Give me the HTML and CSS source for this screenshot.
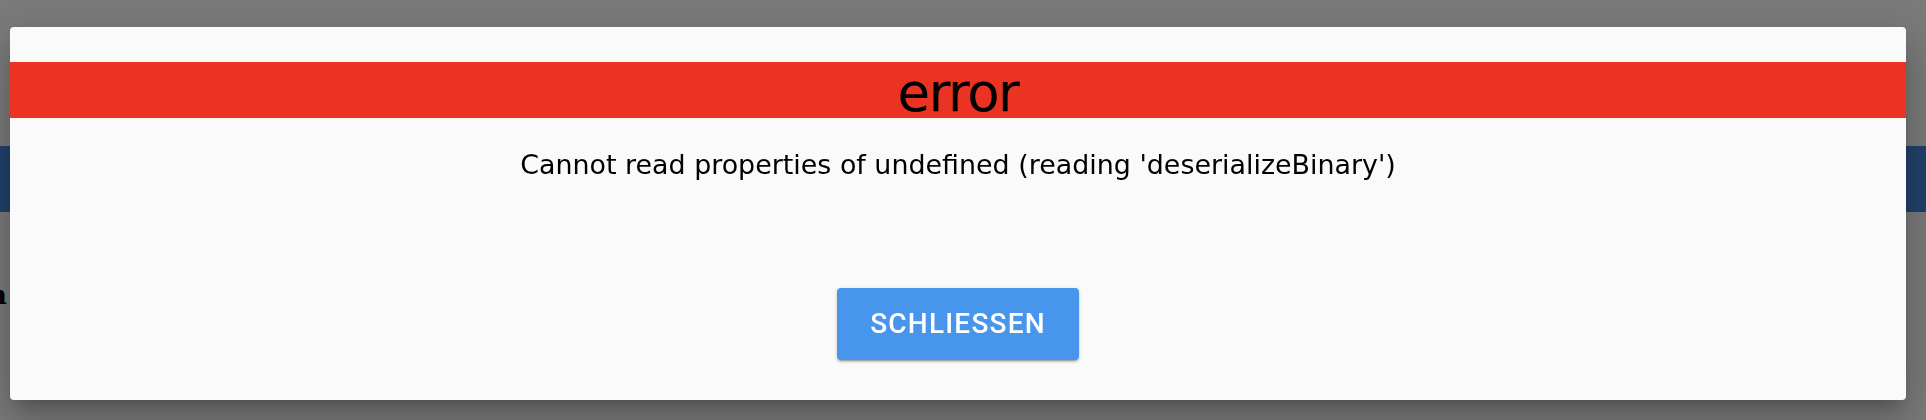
FILE: index.html
```html
<!DOCTYPE html>
<html lang="de">
<head>
<meta charset="utf-8">
<title>error</title>
<link rel="stylesheet" href="styles.css">
</head>
<body>
<div class="page">
  <div class="topbar"></div>
  <p class="pagetext"><span class="clipped">Daten</span></p>
</div>
<div class="overlay">
  <div class="dialog" role="dialog">
    <h1 class="dialog-title">error</h1>
    <p class="dialog-message">Cannot read properties of undefined (reading 'deserializeBinary')</p>
    <div class="dialog-actions">
      <button class="btn-close" type="button">Schliessen</button>
    </div>
  </div>
</div>
</body>
</html>
```

FILE: styles.css
```css
html, body {
  margin: 0;
  padding: 0;
  height: 100%;
  overflow: hidden;
}

body {
  background: #ffffff;
  font-family: "DejaVu Sans", Verdana, sans-serif;
}

.page {
  padding-top: 146px;
}

.topbar {
  height: 66px;
  background: #4587dd;
}

.pagetext {
  margin: 68px 0 0 0;
  font-family: "DejaVu Serif", "Liberation Serif", serif;
  font-weight: bold;
  font-size: 26px;
  line-height: 30px;
  color: #000;
  text-align: left;
}

.clipped {
  display: inline-block;
  transform: translateX(calc(-100% + 7px));
}

.overlay {
  position: fixed;
  inset: 0;
  background: rgba(0, 0, 0, 0.52);
  display: flex;
  flex-direction: column;
  align-items: center;
  padding: 27px 20px 0 10px;
  box-sizing: border-box;
}

.dialog {
  width: 1896px;
  height: 373px;
  box-sizing: border-box;
  background: #fafafa;
  border-radius: 4px;
  padding: 35px 0 40px 0;
  display: flex;
  flex-direction: column;
  box-shadow: 0 11px 15px -7px rgba(0,0,0,0.2),
              0 24px 38px 3px rgba(0,0,0,0.14),
              0 9px 46px 8px rgba(0,0,0,0.12);
}

.dialog-title {
  margin: 0;
  background: #ea3323;
  color: #000;
  font-family: "DejaVu Sans", Verdana, sans-serif;
  font-weight: normal;
  font-size: 53px;
  letter-spacing: -1.5px;
  line-height: 50px;
  padding-top: 6px;
  height: 50px;
  text-align: center;
}

.dialog-message {
  margin: 31px 0 0 0;
  font-size: 26.9px;
  line-height: 32px;
  color: #000;
  text-align: center;
}

.dialog-actions {
  margin-top: auto;
  display: flex;
  justify-content: center;
}

.btn-close {
  width: 242px;
  height: 72px;
  padding: 0;
  border: none;
  border-radius: 4px;
  background: #4796ec;
  color: #ffffff;
  font-family: Roboto, "Liberation Sans", sans-serif;
  font-weight: 500;
  font-size: 28px;
  letter-spacing: 1.2px;
  line-height: 72px;
  text-transform: uppercase;
  box-shadow: 0 3px 1px -2px rgba(0,0,0,0.2),
              0 2px 2px 0 rgba(0,0,0,0.14),
              0 1px 5px 0 rgba(0,0,0,0.12);
  cursor: pointer;
}
```
